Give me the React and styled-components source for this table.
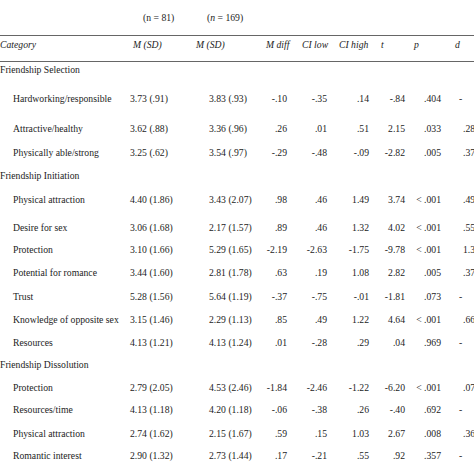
import React from 'react';
import styled, { createGlobalStyle } from 'styled-components';

const GlobalStyle = createGlobalStyle`
  html, body {
    margin: 0;
    padding: 0;
    background: #ffffff;
    overflow: hidden;
  }
  body {
    font-family: "Liberation Serif", "Times New Roman", serif;
    font-size: 9.7px;
    color: #1c1c1c;
  }
`;

const COLUMNS = '130px 79px 53px 25px 40px 42px 36px 36px 1fr';

const Table = styled.div`
  width: 474px;
  display: flex;
  flex-direction: column;
`;

const NRow = styled.div`
  height: 35px;
  display: grid;
  grid-template-columns: 143px 64px 1fr;
  align-items: center;
  white-space: nowrap;
`;

const HeaderRow = styled.div`
  display: grid;
  grid-template-columns: 133px 63px 70px 36px 37px 42px 33px 41px 1fr;
  padding: 3px 0 10px 0;
  line-height: 12px;
  border-top: 1px solid #666666;
  border-bottom: 1px solid #666666;
  font-style: italic;
  white-space: nowrap;
`;

const GroupTitle = styled.div`
  margin-top: ${(p) => p.$gap}px;
  line-height: 12px;
  white-space: nowrap;
`;

const Row = styled.div`
  display: grid;
  grid-template-columns: ${COLUMNS};
  margin-top: ${(p) => p.$gap}px;
  line-height: 12px;
  white-space: nowrap;
`;

const Label = styled.div`
  padding-left: 13px;
`;

const Cell = styled.div`
  text-align: ${(p) => p.$align || 'left'};
`;

// d column: dashes sit a little left of the numbers
const DCell = styled.div`
  padding-left: ${(p) => (p.$dash ? 18 : 22)}px;
`;

const Ital = styled.i`
  font-style: italic;
`;

const sections = [
  {
    title: 'Friendship Selection',
    gap: 2,
    rows: [
      ['Hardworking/responsible', '3.73 (.91)', '3.83 (.93)', '-.10', '-.35', '.14', '-.84', '.404', '-', 17],
      ['Attractive/healthy', '3.62 (.88)', '3.36 (.96)', '.26', '.01', '.51', '2.15', '.033', '.28', 18],
      ['Physically able/strong', '3.25 (.62)', '3.54 (.97)', '-.29', '-.48', '-.09', '-2.82', '.005', '.37', 12],
    ],
  },
  {
    title: 'Friendship Initiation',
    gap: 11,
    rows: [
      ['Physical attraction', '4.40 (1.86)', '3.43 (2.07)', '.98', '.46', '1.49', '3.74', '< .001', '.49', 12],
      ['Desire for sex', '3.06 (1.68)', '2.17 (1.57)', '.89', '.46', '1.32', '4.02', '< .001', '.55', 16],
      ['Protection', '3.10 (1.66)', '5.29 (1.65)', '-2.19', '-2.63', '-1.75', '-9.78', '< .001', '1.32', 10],
      ['Potential for romance', '3.44 (1.60)', '2.81 (1.78)', '.63', '.19', '1.08', '2.82', '.005', '.37', 11],
      ['Trust', '5.28 (1.56)', '5.64 (1.19)', '-.37', '-.75', '-.01', '-1.81', '.073', '-', 12],
      ['Knowledge of opposite sex', '3.15 (1.46)', '2.29 (1.13)', '.85', '.49', '1.22', '4.64', '< .001', '.66', 11],
      ['Resources', '4.13 (1.21)', '4.13 (1.24)', '.01', '-.28', '.29', '.04', '.969', '-', 11],
    ],
  },
  {
    title: 'Friendship Dissolution',
    gap: 10,
    rows: [
      ['Protection', '2.79 (2.05)', '4.53 (2.46)', '-1.84', '-2.46', '-1.22', '-6.20', '< .001', '.07', 11],
      ['Resources/time', '4.13 (1.18)', '4.20 (1.18)', '-.06', '-.38', '.26', '-.40', '.692', '-', 10],
      ['Physical attraction', '2.74 (1.62)', '2.15 (1.67)', '.59', '.15', '1.03', '2.67', '.008', '.36', 12],
      ['Romantic interest', '2.90 (1.32)', '2.73 (1.44)', '.17', '-.21', '.55', '.92', '.357', '-', 10],
    ],
  },
];

export default function App() {
  return (
    <>
      <GlobalStyle />
      <Table>
        <NRow>
          <div />
          <div>(n = 81)</div>
          <div>
            (<Ital>n</Ital> = 169)
          </div>
        </NRow>
        <HeaderRow>
          <div>Category</div>
          <div>M (SD)</div>
          <div>M (SD)</div>
          <div>M diff</div>
          <div>CI low</div>
          <div>CI high</div>
          <div>t</div>
          <div>p</div>
          <div>d</div>
        </HeaderRow>
        {sections.map((s) => (
          <React.Fragment key={s.title}>
            <GroupTitle $gap={s.gap}>{s.title}</GroupTitle>
            {s.rows.map((r) => (
              <Row key={s.title + r[0]} $gap={r[9]}>
                <Label>{r[0]}</Label>
                <Cell>{r[1]}</Cell>
                <Cell>{r[2]}</Cell>
                <Cell $align="right">{r[3]}</Cell>
                <Cell $align="right">{r[4]}</Cell>
                <Cell $align="right">{r[5]}</Cell>
                <Cell $align="right">{r[6]}</Cell>
                <Cell $align="right">{r[7]}</Cell>
                <DCell $dash={r[8] === '-'}>{r[8]}</DCell>
              </Row>
            ))}
          </React.Fragment>
        ))}
      </Table>
    </>
  );
}
